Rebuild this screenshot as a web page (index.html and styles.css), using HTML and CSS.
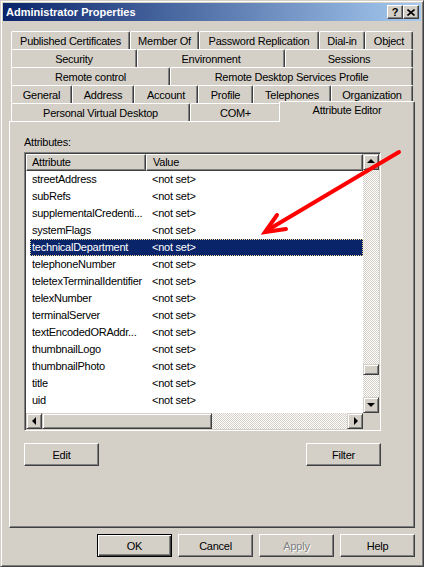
FILE: index.html
```html
<!DOCTYPE html>
<html>
<head>
<meta charset="utf-8">
<link rel="stylesheet" href="styles.css">
</head>
<body>
<div class="window">
  <div class="titlebar">
    <span class="title">Administrator Properties</span>
    <div class="caps">
      <span class="cap help">?</span>
      <span class="cap close"><svg width="8" height="7" viewBox="0 0 8 7"><path d="M0.5 0.5L7.5 6.5M7.5 0.5L0.5 6.5" stroke="#000" stroke-width="1.6" fill="none"/></svg></span>
    </div>
  </div>

  <div class="tabs">
    <div class="tabrow r1">
      <div class="tab">Published Certificates</div>
      <div class="tab">Member Of</div>
      <div class="tab">Password Replication</div>
      <div class="tab">Dial-in</div>
      <div class="tab">Object</div>
    </div>
    <div class="tabrow r2">
      <div class="tab">Security</div>
      <div class="tab">Environment</div>
      <div class="tab">Sessions</div>
    </div>
    <div class="tabrow r3">
      <div class="tab">Remote control</div>
      <div class="tab">Remote Desktop Services Profile</div>
    </div>
    <div class="tabrow r4">
      <div class="tab">General</div>
      <div class="tab">Address</div>
      <div class="tab">Account</div>
      <div class="tab">Profile</div>
      <div class="tab">Telephones</div>
      <div class="tab">Organization</div>
    </div>
    <div class="tabrow r5">
      <div class="tab">Personal Virtual Desktop</div>
      <div class="tab">COM+</div>
      <div class="tab selected">Attribute Editor</div>
    </div>
  </div>

  <div class="panel">
    <div class="label">Attributes:</div>
    <div class="listbox">
      <div class="content">
        <div class="header">
          <div class="hcell hattr">Attribute</div>
          <div class="hcell hval">Value</div>
        </div>
        <div class="rows">
          <div class="row"><span class="attr">streetAddress</span><span class="val">&lt;not set&gt;</span></div>
          <div class="row"><span class="attr">subRefs</span><span class="val">&lt;not set&gt;</span></div>
          <div class="row"><span class="attr">supplementalCredenti...</span><span class="val">&lt;not set&gt;</span></div>
          <div class="row"><span class="attr">systemFlags</span><span class="val">&lt;not set&gt;</span></div>
          <div class="row sel"><span class="attr">technicalDepartment</span><span class="val">&lt;not set&gt;</span></div>
          <div class="row"><span class="attr">telephoneNumber</span><span class="val">&lt;not set&gt;</span></div>
          <div class="row"><span class="attr">teletexTerminalIdentifier</span><span class="val">&lt;not set&gt;</span></div>
          <div class="row"><span class="attr">telexNumber</span><span class="val">&lt;not set&gt;</span></div>
          <div class="row"><span class="attr">terminalServer</span><span class="val">&lt;not set&gt;</span></div>
          <div class="row"><span class="attr">textEncodedORAddr...</span><span class="val">&lt;not set&gt;</span></div>
          <div class="row"><span class="attr">thumbnailLogo</span><span class="val">&lt;not set&gt;</span></div>
          <div class="row"><span class="attr">thumbnailPhoto</span><span class="val">&lt;not set&gt;</span></div>
          <div class="row"><span class="attr">title</span><span class="val">&lt;not set&gt;</span></div>
          <div class="row"><span class="attr">uid</span><span class="val">&lt;not set&gt;</span></div>
          <div class="row"><span class="attr">unicodePwd</span><span class="val">&lt;not set&gt;</span></div>
        </div>
      </div>
      <div class="vscroll">
        <div class="sbtn up"></div>
        <div class="vtrack"><div class="thumb vthumb"></div></div>
        <div class="sbtn down"></div>
      </div>
      <div class="hscroll">
        <div class="sbtn left"></div>
        <div class="thumb hthumb"></div>
        <div class="htrack"></div>
        <div class="sbtn right"></div>
      </div>
      <div class="corner"></div>
    </div>
    <div class="panel-btns">
      <button class="btn">Edit</button>
      <button class="btn">Filter</button>
    </div>
  </div>

  <div class="dlg-btns">
    <button class="btn default">OK</button>
    <button class="btn">Cancel</button>
    <button class="btn disabled">Apply</button>
    <button class="btn">Help</button>
  </div>

  <svg class="arrow" width="424" height="567" viewBox="0 0 424 567">
    <path d="M399 152L266 231" stroke="#ff0000" stroke-width="4" fill="none" stroke-linecap="round"/>
    <path d="M277 215L265 232L286 229" stroke="#ff0000" stroke-width="4" fill="none" stroke-linecap="round" stroke-linejoin="miter"/>
  </svg>
</div>
</body>
</html>
```
FILE: styles.css
```css
* { box-sizing: border-box; }

body {
  margin: 0;
  background: #d4d0c8;
  font: 11px "Liberation Sans", Arial, sans-serif;
  letter-spacing: -0.25px;
  color: #000;
}

.window {
  position: relative;
  width: 424px;
  height: 567px;
  border: 1px solid;
  border-color: #d4d0c8 #404040 #404040 #d4d0c8;
  box-shadow: inset 1px 1px #fff, inset -1px -1px #808080;
  padding: 2px;
  background: #d4d0c8;
  display: flex;
  flex-direction: column;
}

.titlebar {
  height: 18px;
  background: linear-gradient(to right, #0a246a, #a6caf0);
  display: flex;
  align-items: center;
  justify-content: space-between;
  padding: 0 2px 0 3px;
  color: #fff;
  font-weight: bold;
  letter-spacing: 0;
}

.caps { display: flex; }

.cap {
  width: 16px;
  height: 14px;
  background: #d4d0c8;
  border: 1px solid;
  border-color: #fff #404040 #404040 #fff;
  box-shadow: inset -1px -1px #808080;
  display: flex;
  align-items: center;
  justify-content: center;
  color: #000;
  font-weight: bold;
  font-size: 11px;
  line-height: 12px;
}

.cap.close { margin-left: 0; }

.tabs {
  margin: 10px 0 0 8px;
  width: 402px;
}

.tabrow {
  display: grid;
  height: 18px;
}

.r1 { grid-template-columns: 119px 69px 120px 46px 48px; }
.r2 { grid-template-columns: 126px 148px 128px; }
.r3 { grid-template-columns: 159px 243px; }
.r4 { grid-template-columns: 61px 62px 64px 55px 78px 82px; }
.r5 { grid-template-columns: 179px 91px 132px; }

.tab {
  background: #d4d0c8;
  border-left: 1px solid #fff;
  border-top: 1px solid #fff;
  border-right: 1px solid #404040;
  box-shadow: inset -1px 0 #808080;
  border-radius: 2px 2px 0 0;
  display: flex;
  align-items: center;
  justify-content: center;
  white-space: nowrap;
  padding-top: 1px;
}

.tab.selected {
  position: relative;
  z-index: 2;
  margin: -2px -2px -1px -2px;
  padding-top: 0;
  padding-bottom: 4px;
}

.panel {
  margin: 0 6px;
  height: 407px;
  border: 1px solid;
  border-color: #fff #404040 #404040 #fff;
  box-shadow: inset -1px -1px #808080;
  padding: 14px 0 0 14px;
}

.label {
  height: 13px;
  line-height: 13px;
  margin-bottom: 3px;
}

.listbox {
  width: 357px;
  height: 279px;
  border: 1px solid;
  border-color: #808080 #fff #fff #808080;
  box-shadow: inset 1px 1px #404040, inset -1px -1px #d4d0c8;
  padding: 1px;
  background: #fff;
  display: grid;
  grid-template-columns: 1fr 16px;
  grid-template-rows: 1fr 16px;
}

.content {
  overflow: hidden;
  background: #fff;
}

.header {
  display: flex;
  height: 17px;
  background: #d4d0c8;
}

.hcell {
  height: 17px;
  line-height: 15px;
  padding-left: 6px;
  border-top: 1px solid #fff;
  border-left: 1px solid #fff;
  border-right: 1px solid #404040;
  border-bottom: 1px solid #404040;
  box-shadow: inset -1px -1px #808080;
}

.hattr { width: 120px; padding-left: 5px; }
.hval { flex: 1; }

.row {
  display: flex;
  height: 17px;
  line-height: 17px;
  margin-left: 4px;
  white-space: nowrap;
}

.attr {
  width: 116px;
  padding-left: 2px;
  overflow: hidden;
}

.val { padding-left: 6px; }

.row.sel {
  background: #0a246a;
  color: #fff;
  outline: 1px dotted #f0d890;
  outline-offset: -1px;
}

.vscroll {
  display: flex;
  flex-direction: column;
}

.vtrack {
  flex: 1;
  background: repeating-conic-gradient(#d4d0c8 0 25%, #fff 0 50%) 0 0 / 2px 2px;
  padding-top: 194px;
}

.hscroll { display: flex; }

.htrack {
  flex: 1;
  background: repeating-conic-gradient(#d4d0c8 0 25%, #fff 0 50%) 0 0 / 2px 2px;
}

.sbtn, .thumb {
  width: 16px;
  height: 16px;
  flex: none;
  background: #d4d0c8;
  border: 1px solid;
  border-color: #d4d0c8 #404040 #404040 #d4d0c8;
  box-shadow: inset 1px 1px #fff, inset -1px -1px #808080;
  position: relative;
}

.vthumb { height: 11px; }
.hthumb { width: 170px; }

.sbtn::before {
  content: "";
  position: absolute;
  width: 0;
  height: 0;
  border: solid transparent;
}

.sbtn.up::before {
  left: 3px; top: 4px;
  border-width: 0 4px 4px 4px;
  border-bottom-color: #000;
}

.sbtn.down::before {
  left: 3px; top: 5px;
  border-width: 4px 4px 0 4px;
  border-top-color: #000;
}

.sbtn.left::before {
  left: 5px; top: 3px;
  border-width: 4px 4px 4px 0;
  border-right-color: #000;
}

.sbtn.right::before {
  left: 6px; top: 3px;
  border-width: 4px 0 4px 4px;
  border-left-color: #000;
}

.corner { background: #d4d0c8; }

.panel-btns {
  width: 357px;
  margin-top: 12px;
  display: flex;
  justify-content: space-between;
}

.btn {
  width: 75px;
  height: 23px;
  padding: 0;
  background: #d4d0c8;
  border: 1px solid;
  border-color: #fff #404040 #404040 #fff;
  box-shadow: inset -1px -1px #808080;
  font: inherit;
  letter-spacing: inherit;
  color: #000;
}

.btn.default {
  border-color: #000;
  box-shadow: inset 1px 1px #fff, inset -1px -1px #404040, inset -2px -2px #808080;
}

.btn.disabled {
  color: #808080;
  text-shadow: 1px 1px #fff;
}

.dlg-btns {
  margin: 6px 6px 0 0;
  display: flex;
  justify-content: flex-end;
  gap: 6px;
}

.arrow {
  position: absolute;
  left: -1px;
  top: -1px;
  pointer-events: none;
}
```
